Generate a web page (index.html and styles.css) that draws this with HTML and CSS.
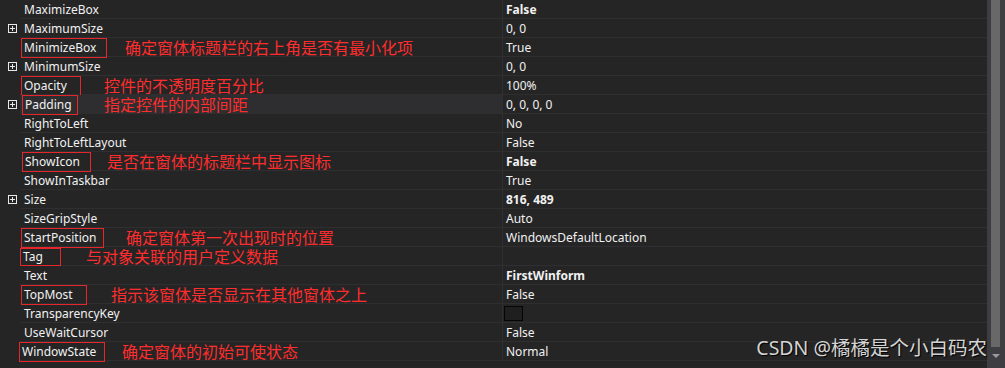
FILE: index.html
```html
<!DOCTYPE html>
<html lang="zh-CN">
  <head>
    <meta charset="UTF-8" />
    <meta name="viewport" content="width=device-width, initial-scale=1.0" />
    <title>属性</title>
    <link rel="stylesheet" href="styles.css">
  </head>
  <body>
    <div class="panel">
      <div class="grid">
        <div class="row">
          <span class="gutter"></span>
          <span class="name">MaximizeBox</span>
          <span class="value bold">False</span>
        </div>
        <div class="row">
          <span class="gutter"><svg class="plus" width="9" height="9" viewBox="0 0 9 9"><rect x="0.5" y="0.5" width="8" height="8" /><path d="M2 4.5h5M4.5 2v5" /></svg></span>
          <span class="name">MaximumSize</span>
          <span class="value">0, 0</span>
        </div>
        <div class="row">
          <span class="gutter"></span>
          <span class="name"><span class="mark m-minimize">MinimizeBox</span><span class="note n-minimize">确定窗体标题栏的右上角是否有最小化项</span></span>
          <span class="value">True</span>
        </div>
        <div class="row">
          <span class="gutter"><svg class="plus" width="9" height="9" viewBox="0 0 9 9"><rect x="0.5" y="0.5" width="8" height="8" /><path d="M2 4.5h5M4.5 2v5" /></svg></span>
          <span class="name">MinimumSize</span>
          <span class="value">0, 0</span>
        </div>
        <div class="row">
          <span class="gutter"></span>
          <span class="name"><span class="mark m-opacity">Opacity</span><span class="note n-opacity">控件的不透明度百分比</span></span>
          <span class="value">100%</span>
        </div>
        <div class="row selected">
          <span class="gutter"><svg class="plus" width="9" height="9" viewBox="0 0 9 9"><rect x="0.5" y="0.5" width="8" height="8" /><path d="M2 4.5h5M4.5 2v5" /></svg></span>
          <span class="name"><span class="mark m-padding">Padding</span><span class="note n-padding">指定控件的内部间距</span></span>
          <span class="value">0, 0, 0, 0</span>
        </div>
        <div class="row">
          <span class="gutter"></span>
          <span class="name">RightToLeft</span>
          <span class="value">No</span>
        </div>
        <div class="row">
          <span class="gutter"></span>
          <span class="name">RightToLeftLayout</span>
          <span class="value">False</span>
        </div>
        <div class="row">
          <span class="gutter"></span>
          <span class="name"><span class="mark m-showicon">ShowIcon</span><span class="note n-showicon">是否在窗体的标题栏中显示图标</span></span>
          <span class="value bold">False</span>
        </div>
        <div class="row">
          <span class="gutter"></span>
          <span class="name">ShowInTaskbar</span>
          <span class="value">True</span>
        </div>
        <div class="row">
          <span class="gutter"><svg class="plus" width="9" height="9" viewBox="0 0 9 9"><rect x="0.5" y="0.5" width="8" height="8" /><path d="M2 4.5h5M4.5 2v5" /></svg></span>
          <span class="name">Size</span>
          <span class="value bold">816, 489</span>
        </div>
        <div class="row">
          <span class="gutter"></span>
          <span class="name">SizeGripStyle</span>
          <span class="value">Auto</span>
        </div>
        <div class="row">
          <span class="gutter"></span>
          <span class="name"><span class="mark m-start">StartPosition</span><span class="note n-start">确定窗体第一次出现时的位置</span></span>
          <span class="value">WindowsDefaultLocation</span>
        </div>
        <div class="row">
          <span class="gutter"></span>
          <span class="name"><span class="mark m-tag">Tag</span><span class="note n-tag">与对象关联的用户定义数据</span></span>
          <span class="value"></span>
        </div>
        <div class="row">
          <span class="gutter"></span>
          <span class="name">Text</span>
          <span class="value bold">FirstWinform</span>
        </div>
        <div class="row">
          <span class="gutter"></span>
          <span class="name"><span class="mark m-topmost">TopMost</span><span class="note n-topmost">指示该窗体是否显示在其他窗体之上</span></span>
          <span class="value">False</span>
        </div>
        <div class="row">
          <span class="gutter"></span>
          <span class="name">TransparencyKey</span>
          <span class="value"><span class="swatch"></span></span>
        </div>
        <div class="row">
          <span class="gutter"></span>
          <span class="name">UseWaitCursor</span>
          <span class="value">False</span>
        </div>
        <div class="row">
          <span class="gutter"></span>
          <span class="name"><span class="mark m-window">WindowState</span><span class="note n-window">确定窗体的初始可使状态</span></span>
          <span class="value">Normal</span>
        </div>
      </div>

      <div class="scrollbar">
        <div class="thumb"></div>
        <div class="arrow"></div>
      </div>

      <div class="watermark">CSDN @橘橘是个小白码农</div>
    </div>
  </body>
</html>
```

FILE: styles.css
```css
html,
body {
  margin: 0;
  padding: 0;
  background: #252526;
}

.panel {
  position: relative;
  display: flex;
  width: 1005px;
  height: 368px;
  overflow: hidden;
  background: #252526;
  font-family: "Noto Sans", "Noto Sans CJK SC", sans-serif;
  font-size: 12px;
  color: #f1f1f1;
}

.grid {
  flex: 1;
  display: flex;
  flex-direction: column;
}

.row {
  display: grid;
  grid-template-columns: 20px 483px 1fr;
  height: 19px;
}

.gutter {
  display: flex;
  align-items: center;
  justify-content: center;
  padding-left: 4px;
  box-sizing: border-box;
  height: 18px;
}

.plus rect {
  fill: none;
  stroke: #e8e8e8;
}

.plus path {
  stroke: #e8e8e8;
}

.name,
.value {
  display: flex;
  align-items: center;
  box-sizing: border-box;
  height: 19px;
  padding-top: 1px;
  line-height: 17px;
  border-bottom: 1px solid #2f2f31;
  white-space: nowrap;
}

.name {
  padding-left: 4px;
  border-right: 1px solid #2f2f31;
}

.value {
  padding-left: 3px;
}

.selected .name {
  background: #2e2e30;
}

.bold {
  font-weight: 700;
}

.swatch {
  width: 17px;
  height: 13px;
  margin-left: -2px;
  background: #1f1f1f;
  border: 1px solid #050505;
}

/* red annotation boxes */
.mark {
  display: inline-flex;
  align-items: center;
  box-sizing: border-box;
  height: 20px;
  margin-left: -3px;
  padding-left: 2px;
  border: 1px solid #e5262b;
}

.note {
  font-family: "Noto Sans CJK SC", sans-serif;
  font-size: 16px;
  line-height: 17px;
  color: #ff2d2d;
}

.m-minimize { width: 86px; }
.n-minimize { margin-left: 18px; }

.m-opacity { width: 60px; }
.n-opacity { margin-left: 23px; }

.m-padding { width: 56px; margin-left: -2px; }
.n-padding { margin-left: 26px; }

.m-showicon { width: 69px; margin-left: -2px; }
.n-showicon { margin-left: 16px; }

.m-start { width: 83px; }
.n-start { margin-left: 22px; }

.m-tag { width: 41px; margin-left: -4px; height: 18px; }
.n-tag { margin-left: 25px; }

.m-topmost { width: 66px; }
.n-topmost { margin-left: 24px; }

.m-window { width: 86px; margin-left: -5px; }
.n-window { margin-left: 17px; }

.scrollbar {
  position: relative;
  width: 18px;
  background: #3e3e42;
}

.thumb {
  width: 9px;
  height: 347px;
  margin-left: 4px;
  background: #686868;
}

.arrow {
  width: 0;
  height: 0;
  margin: 7px 0 0 5px;
  border-left: 4px solid transparent;
  border-right: 4px solid transparent;
  border-top: 4px solid #9a9a9a;
}

.watermark {
  position: absolute;
  right: 18px;
  bottom: 7px;
  font-family: "Noto Sans", "Noto Sans CJK SC", sans-serif;
  font-size: 19.5px;
  line-height: 26px;
  color: #d4d4d4;
  text-shadow: 1px 1px 1px #000;
}
```
